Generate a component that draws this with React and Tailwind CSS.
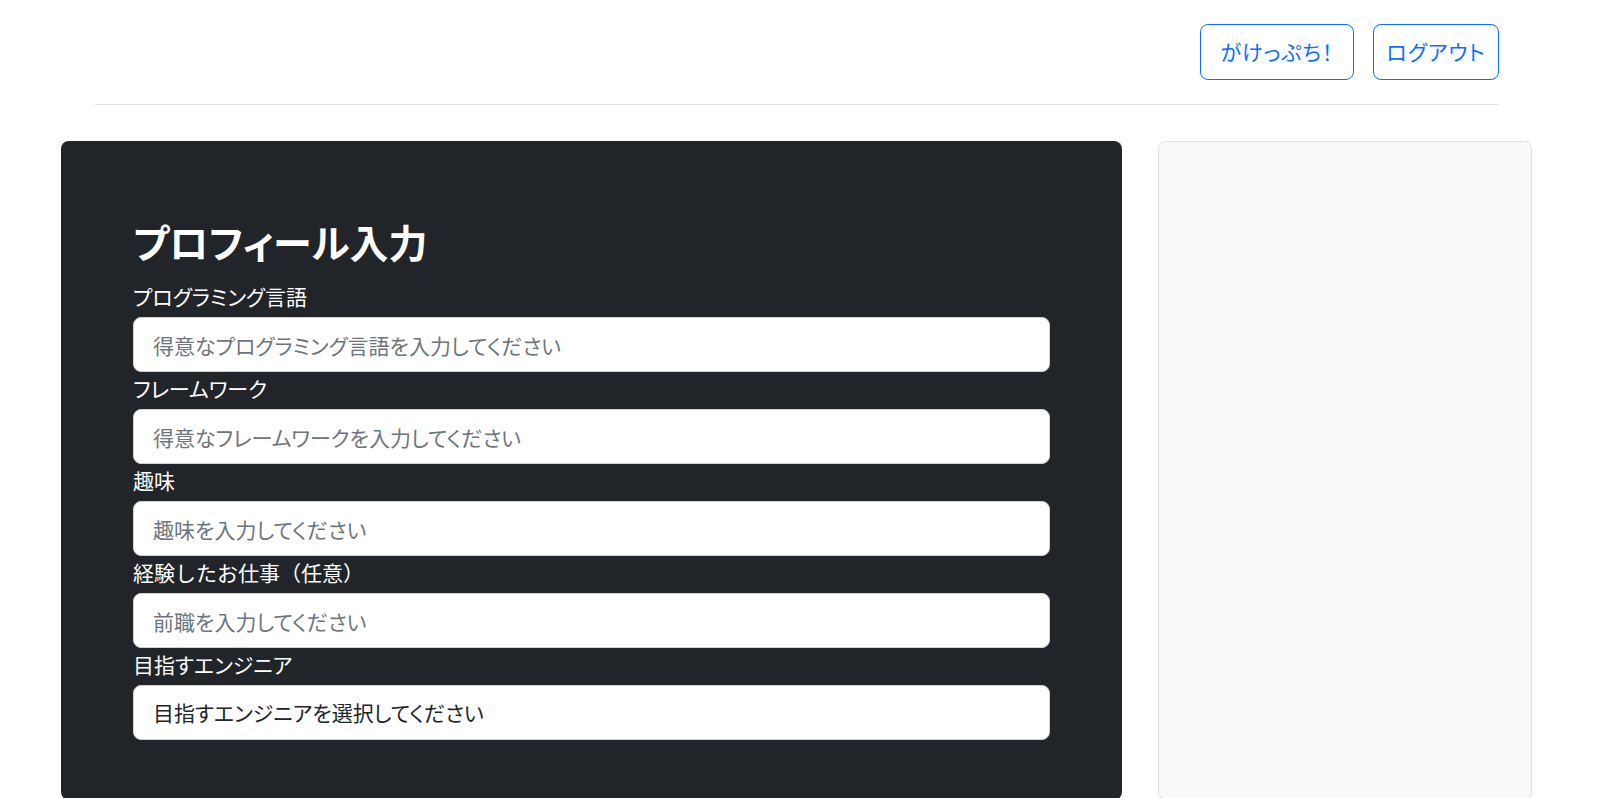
import { useState } from "react";

const fields = [
  { label: "プログラミング言語", placeholder: "得意なプログラミング言語を入力してください" },
  { label: "フレームワーク", placeholder: "得意なフレームワークを入力してください" },
  { label: "趣味", placeholder: "趣味を入力してください" },
  { label: "経験したお仕事（任意）", placeholder: "前職を入力してください", wide: true },
];

const styles = {
  label: "block h-[32px] mb-[5px] text-[21px] leading-[32px] text-white",
  input:
    "block w-full h-[55px] px-[19px] rounded-[8px] border border-[#ced4da] bg-white text-[21px] text-[#212529] placeholder:text-[#6c757d] outline-none",
  button:
    "flex items-center justify-center h-[56px] rounded-[8px] border border-[#0d6efd] text-[21px] tracking-[1px] text-[#0d6efd] bg-white",
};

const App = () => {
  const [values, setValues] = useState({});

  const handleChange = (key, value) => {
    setValues({ ...values, [key]: value });
  };

  return (
    <div
      className="min-w-[1640px] bg-white pb-[48px] [font-feature-settings:'palt']"
      style={{ fontFamily: '"Noto Sans CJK JP", "Noto Sans", sans-serif' }}
    >
      {/* header */}
      <div className="ml-[95px] w-[1404px] pt-[24px]">
        <div className="flex justify-end gap-[19px]">
          <button className={`${styles.button} w-[154px]`}>がけっぷち！</button>
          <button className={`${styles.button} w-[126px]`}>ログアウト</button>
        </div>
        <hr className="mt-[24px] border-t border-[#dee2e6]" />
      </div>

      <div className="flex gap-[36px] ml-[61px] mt-[36px]">
        {/* profile form */}
        <div className="w-[1061px] rounded-[8px] bg-[#212529] px-[72px] pt-[76px] pb-[60px]">
          <h1 className="mb-[15px] text-[39px] leading-[48px] font-semibold text-white">
            プロフィール入力
          </h1>

          {fields.map((field, index) => (
            <div key={index}>
              <label
                className={`${styles.label} ${field.wide ? "[font-feature-settings:normal]" : ""}`}
              >
                {field.label}
              </label>
              <input
                type="text"
                className={styles.input}
                placeholder={field.placeholder}
                value={values[index] || ""}
                onChange={(e) => handleChange(index, e.target.value)}
              />
            </div>
          ))}

          <div>
            <label className={styles.label}>目指すエンジニア</label>
            <select className={`${styles.input} appearance-none`} defaultValue="">
              <option value="">目指すエンジニアを選択してください</option>
            </select>
          </div>
        </div>

        {/* side panel */}
        <div className="w-[374px] rounded-[8px] border border-[#dee2e6] bg-[#f8f9fa]"></div>
      </div>
    </div>
  );
};

export default App;
